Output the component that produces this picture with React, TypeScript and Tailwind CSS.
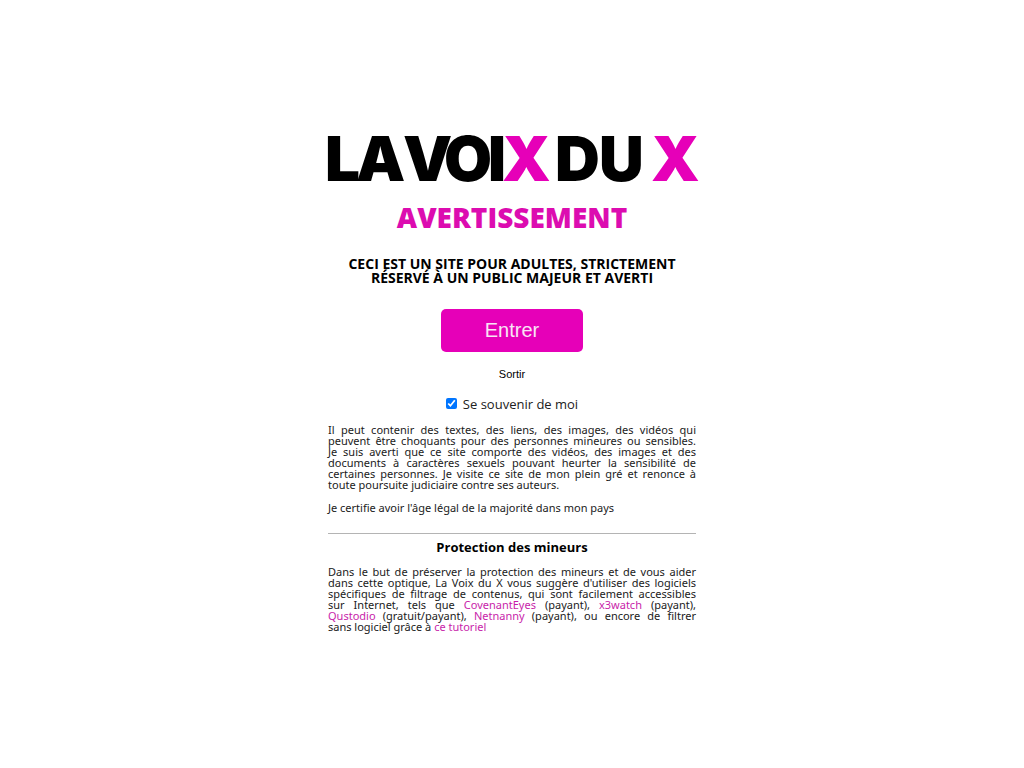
import type { ReactNode } from "react";

function Logo() {
  return (
    <svg
      viewBox="0 0 368 48"
      role="img"
      aria-label="La Voix du X"
      className="block w-full overflow-visible font-['Inter',sans-serif] text-[62px] font-black"
    >
      <g fill="#e600b8">
        <text x="174" y="48">X</text>
        <text x="323" y="48">X</text>
      </g>
      <g fill="#000000">
        <text x="-3" y="48">L</text>
        <text x="28" y="48">A</text>
        <text x="75" y="48">V</text>
        <text x="116" y="48">O</text>
        <text x="160" y="48">I</text>
        <text x="227" y="48">D</text>
        <text x="271" y="48">U</text>
      </g>
    </svg>
  );
}

function TextLink({ href, children }: { href: string; children: ReactNode }) {
  return (
    <a href={href} className="text-[#c81eaa]">
      {children}
    </a>
  );
}

export default function App() {
  return (
    <main className="flex min-h-screen items-center justify-center bg-white pb-1 font-['Open_Sans','Noto_Sans',sans-serif] text-[#212121]">
      <div className="flex w-full max-w-[368px] flex-col">
        <Logo />
        <h1 className="mt-5 text-center text-[28px] leading-8 font-extrabold text-[#dc0cb0]">
          AVERTISSEMENT
        </h1>
        <h2 className="mt-6 text-center text-[14px] leading-[14px] font-bold text-black">
          CECI EST UN SITE POUR ADULTES, STRICTEMENT RÉSERVÉ À UN PUBLIC MAJEUR ET AVERTI
        </h2>
        <div className="mt-6 flex flex-col items-center font-['Liberation_Sans',sans-serif]">
          <button
            type="button"
            className="rounded-[5px] bg-[#e600b8] px-11 py-2 text-[20px] leading-[27px] text-[#f8e4f4]"
          >
            Entrer
          </button>
          <button type="button" className="mt-4 text-[11px] leading-3 text-black">
            Sortir
          </button>
        </div>
        <label className="mt-4 flex items-center justify-center gap-1.5 text-[13px] leading-4">
          <input type="checkbox" defaultChecked className="size-[11px]" />
          Se souvenir de moi
        </label>
        <p className="mt-3 text-justify font-['Noto_Sans',sans-serif] text-[11px] leading-[11px]">
          Il peut contenir des textes, des liens, des images, des vidéos qui peuvent être choquants
          pour des personnes mineures ou sensibles. Je&nbsp;suis averti que ce site comporte des
          vidéos, des images et des documents à caractères sexuels pouvant heurter la sensibilité de
          certaines personnes. Je visite ce site de mon plein gré et renonce à toute poursuite
          judiciaire contre ses auteurs.
        </p>
        <p className="mt-3 font-['Noto_Sans',sans-serif] text-[11px] leading-[11px]">
          Je certifie avoir l'âge légal de la majorité dans mon pays
        </p>
        <hr className="mt-5 border-[#b4b4b4]" />
        <h3 className="mt-[7px] text-center text-[13px] leading-[13px] font-bold text-black">
          Protection des mineurs
        </h3>
        <p className="mt-3 text-justify font-['Noto_Sans',sans-serif] text-[11px] leading-[11px]">
          Dans le but de préserver la protection des mineurs et de vous aider dans cette optique, La
          Voix du X vous suggère d'utiliser des logiciels spécifiques de filtrage de contenus, qui
          sont facilement accessibles sur&nbsp;Internet, tels que{" "}
          <TextLink href="#covenanteyes">CovenantEyes</TextLink> (payant),{" "}
          <TextLink href="#x3watch">x3watch</TextLink> (payant),{" "}
          <TextLink href="#qustodio">Qustodio</TextLink>&nbsp;(gratuit/payant),{" "}
          <TextLink href="#netnanny">Netnanny</TextLink> (payant), ou encore de filtrer
          sans&nbsp;logiciel grâce à <TextLink href="#tutoriel">ce tutoriel</TextLink>
        </p>
      </div>
    </main>
  );
}
